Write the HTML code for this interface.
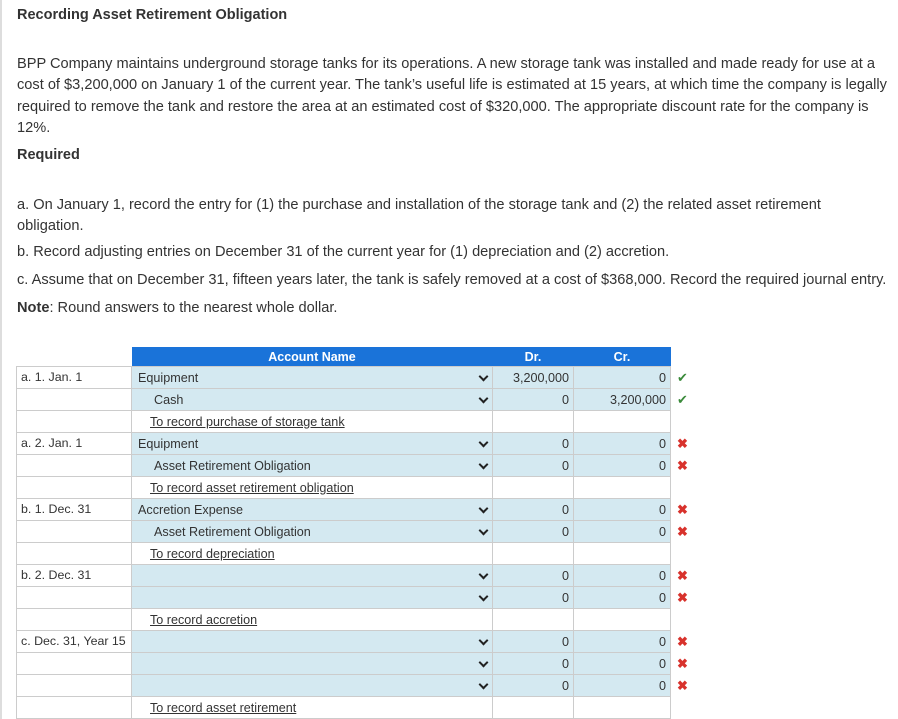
<!DOCTYPE html>
<html><head><meta charset="utf-8"><style>
body{margin:0;width:898px;height:719px;background:#fff;font-family:"Liberation Sans",sans-serif;color:#333;position:relative;overflow:hidden}
.lb{position:absolute;left:0;top:0;width:2px;height:719px;background:#ddd}
.t{position:absolute;left:17px;white-space:nowrap;font-size:14.6px}
b{color:#333}
table{position:absolute;left:16px;top:347px;border-collapse:collapse;font-size:12.6px;table-layout:fixed;width:690px}
td{height:22px;padding:0;border:1px solid #ccc;white-space:nowrap;color:#333;box-sizing:border-box;overflow:hidden}
th{background:#1a73d9;color:#fff;height:19px;font-size:12.5px;padding:0;border:none}
.d{padding-left:4px;background:#fff;vertical-align:top;padding-top:3px;font-size:12.4px}
.a{background:#d4e9f1;padding-left:6px;border-right:none}
.a.in{padding-left:22px}
.s{background:#d4e9f1;border-left:none;text-align:center}
.n{background:#d4e9f1;text-align:right;padding-right:4px}
.w{background:#fff}
.lk{padding-left:18px;background:#fff;text-decoration:underline}
.i{border:none;padding-left:6px;background:#fff;font-size:13px}
.ok{color:#3a8a3a}.x{color:#d8322c;font-weight:bold}
.chev{display:inline-block;width:5px;height:5px;border-right:2px solid #222;border-bottom:2px solid #222;transform:rotate(45deg);margin-top:-4px;vertical-align:middle}
</style></head><body>
<div class="lb"></div>
<div class="t" style="top:7px;font-weight:bold;font-size:14.5px">Recording Asset Retirement Obligation</div>
<div class="t" style="top:54px;line-height:21.3px">BPP Company maintains underground storage tanks for its operations. A new storage tank was installed and made ready for use at a<br>cost of $3,200,000 on January 1 of the current year. The tank’s useful life is estimated at 15 years, at which time the company is legally<br>required to remove the tank and restore the area at an estimated cost of $320,000. The appropriate discount rate for the company is<br>12%.</div>
<div class="t" style="top:147px;font-weight:bold;font-size:14.5px">Required</div>
<div class="t" style="top:195px;line-height:21px">a. On January 1, record the entry for (1) the purchase and installation of the storage tank and (2) the related asset retirement<br>obligation.</div>
<div class="t" style="top:244px">b. Record adjusting entries on December 31 of the current year for (1) depreciation and (2) accretion.</div>
<div class="t" style="top:272px">c. Assume that on December 31, fifteen years later, the tank is safely removed at a cost of $368,000. Record the required journal entry.</div>
<div class="t" style="top:300px"><b>Note</b>: Round answers to the nearest whole dollar.</div>
<table>
<colgroup><col style="width:115px"><col style="width:343px"><col style="width:18px"><col style="width:81px"><col style="width:97px"><col style="width:36px"></colgroup>
<tr><th style="background:#fff"></th><th colspan="2" style="text-align:center">Account Name</th><th>Dr.</th><th>Cr.</th><th style="background:#fff"></th></tr>
<tr><td class="d">a. 1. Jan. 1</td><td class="a">Equipment</td><td class="s"><span class="chev"></span></td><td class="n">3,200,000</td><td class="n">0</td><td class="i ok">✔</td></tr>
<tr><td class="d"></td><td class="a in">Cash</td><td class="s"><span class="chev"></span></td><td class="n">0</td><td class="n">3,200,000</td><td class="i ok">✔</td></tr>
<tr><td class="d"></td><td class="lk" colspan="2">To record purchase of storage tank</td><td class="w"></td><td class="w"></td><td class="i"></td></tr>
<tr><td class="d">a. 2. Jan. 1</td><td class="a">Equipment</td><td class="s"><span class="chev"></span></td><td class="n">0</td><td class="n">0</td><td class="i x">✖</td></tr>
<tr><td class="d"></td><td class="a in">Asset Retirement Obligation</td><td class="s"><span class="chev"></span></td><td class="n">0</td><td class="n">0</td><td class="i x">✖</td></tr>
<tr><td class="d"></td><td class="lk" colspan="2">To record asset retirement obligation</td><td class="w"></td><td class="w"></td><td class="i"></td></tr>
<tr><td class="d">b. 1. Dec. 31</td><td class="a">Accretion Expense</td><td class="s"><span class="chev"></span></td><td class="n">0</td><td class="n">0</td><td class="i x">✖</td></tr>
<tr><td class="d"></td><td class="a in">Asset Retirement Obligation</td><td class="s"><span class="chev"></span></td><td class="n">0</td><td class="n">0</td><td class="i x">✖</td></tr>
<tr><td class="d"></td><td class="lk" colspan="2">To record depreciation</td><td class="w"></td><td class="w"></td><td class="i"></td></tr>
<tr><td class="d">b. 2. Dec. 31</td><td class="a"></td><td class="s"><span class="chev"></span></td><td class="n">0</td><td class="n">0</td><td class="i x">✖</td></tr>
<tr><td class="d"></td><td class="a"></td><td class="s"><span class="chev"></span></td><td class="n">0</td><td class="n">0</td><td class="i x">✖</td></tr>
<tr><td class="d"></td><td class="lk" colspan="2">To record accretion</td><td class="w"></td><td class="w"></td><td class="i"></td></tr>
<tr><td class="d">c. Dec. 31, Year 15</td><td class="a"></td><td class="s"><span class="chev"></span></td><td class="n">0</td><td class="n">0</td><td class="i x">✖</td></tr>
<tr><td class="d"></td><td class="a"></td><td class="s"><span class="chev"></span></td><td class="n">0</td><td class="n">0</td><td class="i x">✖</td></tr>
<tr><td class="d"></td><td class="a"></td><td class="s"><span class="chev"></span></td><td class="n">0</td><td class="n">0</td><td class="i x">✖</td></tr>
<tr><td class="d"></td><td class="lk" colspan="2">To record asset retirement</td><td class="w"></td><td class="w"></td><td class="i"></td></tr>
</table>
</body></html>
